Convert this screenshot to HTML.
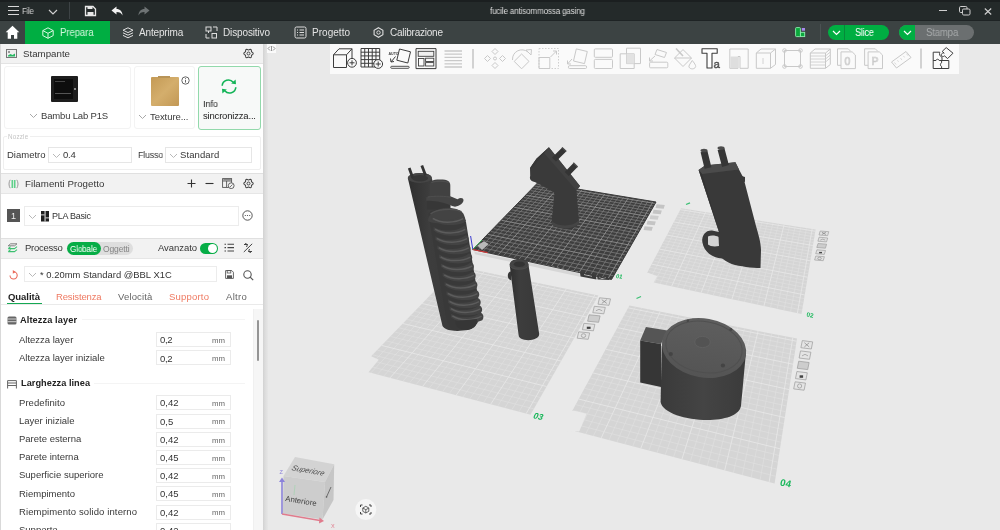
<!DOCTYPE html>
<html><head><meta charset="utf-8"><style>
*{box-sizing:border-box;margin:0;padding:0}
html,body{width:1000px;height:530px;overflow:hidden;background:#e9e9e9;font-family:"Liberation Sans",sans-serif;position:relative}
.a{position:absolute}
svg.a{will-change:transform}
.t{position:absolute;white-space:nowrap;line-height:1;font-family:"Liberation Sans",sans-serif;will-change:transform}
</style></head><body>
<div class="a" style="left:0px;top:0px;width:1000px;height:21px;background:#242a2a;"></div>
<div class="a" style="left:0px;top:0px;width:1000px;height:1.5px;background:#1b1f20;"></div>
<div class="a" style="left:0px;top:20px;width:1000px;height:1.3px;background:#1e2324;"></div>
<div class="a" style="left:8px;top:6px;width:11px;height:1.4px;background:#d8d8d8;"></div>
<div class="a" style="left:8px;top:10px;width:11px;height:1.4px;background:#d8d8d8;"></div>
<div class="a" style="left:8px;top:14px;width:11px;height:1.4px;background:#d8d8d8;"></div>
<div class="t" style="left:22.00px;top:7.10px;font-size:8.8px;color:#d0d0d0;letter-spacing:-0.305px;font-weight:normal;font-style:normal;transform:scaleX(0.9049);transform-origin:0 0;">File</div>
<svg class="a" style="left:48px;top:8.5px" width="10" height="6" viewBox="0 0 10 6"><path d="M1 1 L5.0 5 L9 1" stroke="#d0d0d0" stroke-width="1.2" fill="none"/></svg>
<div class="a" style="left:69px;top:2px;width:1px;height:17px;background:#3d4345;"></div>
<svg class="a" style="left:84px;top:5px" width="13" height="12" viewBox="0 0 13 12"><path d="M1.5 1.5 H9 L11.5 4 V10.5 H1.5 Z" stroke="#e8e8e8" stroke-width="1.3" fill="none"/><rect x="3.5" y="1.5" width="5" height="2.5" fill="#e8e8e8"/><rect x="3.5" y="7" width="6" height="3.5" fill="#e8e8e8"/></svg>
<svg class="a" style="left:111px;top:6px" width="12" height="10" viewBox="0 0 12 10"><path d="M5.5 0.5 L0.5 4.5 L5.5 8.5 V6 C8.5 6 10.5 7 11.5 9.5 C11.5 5.5 9 3 5.5 3 Z" fill="#f2f2f2"/></svg>
<svg class="a" style="left:138px;top:6px" width="12" height="10" viewBox="0 0 12 10"><path d="M6.5 0.5 L11.5 4.5 L6.5 8.5 V6 C3.5 6 1.5 7 0.5 9.5 C0.5 5.5 3 3 6.5 3 Z" fill="#6e7374"/></svg>
<div class="t" style="left:490.20px;top:7.20px;font-size:8.7px;color:#dcdcdc;letter-spacing:-0.194px;font-weight:normal;font-style:normal;transform:scaleX(0.9326);transform-origin:0 0;">fucile antisommossa gasing</div>
<div class="a" style="left:938.5px;top:10px;width:8px;height:1px;background:#cfcfcf;"></div>
<svg class="a" style="left:959px;top:6px" width="13" height="10" viewBox="0 0 13 10"><rect x="0.5" y="0.5" width="7.5" height="6" rx="1.2" stroke="#cfcfcf" fill="none"/><rect x="3.5" y="3" width="7.5" height="6" rx="1.2" stroke="#cfcfcf" fill="#242a2b"/></svg>
<svg class="a" style="left:984px;top:8px" width="8" height="7" viewBox="0 0 8 7"><path d="M0.8 0.5 L7.2 6.5 M7.2 0.5 L0.8 6.5" stroke="#d0d0d0" stroke-width="1.1"/></svg>
<div class="a" style="left:0px;top:21px;width:1000px;height:23px;background:#3c4343;"></div>
<svg class="a" style="left:5px;top:25px" width="15" height="15" viewBox="0 0 15 15"><path d="M7.5 0.8 L14.3 7.2 H12.3 V13.8 H9 V10 H6 V13.8 H2.7 V7.2 H0.7 Z" fill="#ffffff"/></svg>
<div class="a" style="left:25px;top:21px;width:85px;height:23px;background:#00ae42;"></div>
<svg class="a" style="left:42px;top:27px" width="12" height="12" viewBox="0 0 12 12"><path d="M6 0.8 L11.2 3.6 V8.6 L6 11.3 L0.8 8.6 V3.6 Z M0.8 3.6 L6 6.3 L11.2 3.6 M6 6.3 V11.3" stroke="#d7f7e0" stroke-width="1" fill="none" stroke-linejoin="round"/></svg>
<div class="t" style="left:59.80px;top:28.00px;font-size:10px;color:#d2f7dc;letter-spacing:-0.134px;font-weight:normal;font-style:normal;transform:scaleX(0.9663);transform-origin:0 0;">Prepara</div>
<svg class="a" style="left:122px;top:27px" width="12" height="12" viewBox="0 0 12 12"><path d="M6 0.8 L11 3.2 L6 5.6 L1 3.2 Z M1 5.8 L6 8.2 L11 5.8 M1 8.4 L6 10.8 L11 8.4" stroke="#dedede" stroke-width="1" fill="none" stroke-linejoin="round"/></svg>
<div class="t" style="left:139.30px;top:28.00px;font-size:10px;color:#e4e4e4;letter-spacing:-0.172px;font-weight:normal;font-style:normal;">Anteprima</div>
<svg class="a" style="left:205px;top:26px" width="13" height="13" viewBox="0 0 13 13"><rect x="1" y="1" width="5" height="4" stroke="#dedede" fill="none"/><path d="M3.5 5 V7" stroke="#dedede"/><rect x="7" y="7.5" width="4.5" height="4.5" stroke="#dedede" fill="none"/><path d="M1 8 V12 H4.5 M8 1 H12 V5" stroke="#dedede" fill="none"/></svg>
<div class="t" style="left:223.00px;top:28.00px;font-size:10px;color:#e4e4e4;letter-spacing:-0.135px;font-weight:normal;font-style:normal;">Dispositivo</div>
<svg class="a" style="left:294px;top:26px" width="13" height="13" viewBox="0 0 13 13"><rect x="1" y="1" width="11" height="11" rx="1.5" stroke="#dedede" fill="none"/><path d="M3 4 H4 M3 6.5 H4 M3 9 H4 M5.5 4 H10 M5.5 6.5 H10 M5.5 9 H10" stroke="#dedede"/></svg>
<div class="t" style="left:312.00px;top:28.00px;font-size:10px;color:#e4e4e4;letter-spacing:0.028px;font-weight:normal;font-style:normal;">Progetto</div>
<svg class="a" style="left:373px;top:27px" width="11" height="11" viewBox="0 0 11 11"><path d="M5.5 0.7 L9.9 3.2 V7.8 L5.5 10.3 L1.1 7.8 V3.2 Z" stroke="#dedede" stroke-width="1.1" fill="none"/><circle cx="5.5" cy="5.5" r="1.7" stroke="#dedede" fill="none"/></svg>
<div class="t" style="left:390.00px;top:28.00px;font-size:10px;color:#e4e4e4;letter-spacing:-0.235px;font-weight:normal;font-style:normal;">Calibrazione</div>
<svg class="a" style="left:794px;top:26px" width="12" height="12" viewBox="0 0 12 12"><rect x="1.6" y="1.6" width="4.8" height="9" rx="0.8" fill="#0aa83c" stroke="#8ff0b0" stroke-width="0.9"/><rect x="6.5" y="6.3" width="4.2" height="4.3" fill="#0aa83c" stroke="#8ff0b0" stroke-width="0.9"/><rect x="7.8" y="2" width="3.2" height="2.7" fill="#a98af0"/></svg>
<div class="a" style="left:820px;top:24px;width:1px;height:16px;background:#4b5253;"></div>
<div class="a" style="left:828px;top:24.5px;width:61px;height:15.5px;background:#00ae42;border-radius:8px"></div>
<div class="a" style="left:843.5px;top:24.5px;width:1px;height:15.5px;background:#068a3a;"></div>
<svg class="a" style="left:832px;top:30px" width="9" height="5.5" viewBox="0 0 9 5.5"><path d="M1 1 L4.5 4.5 L8 1" stroke="#ffffff" stroke-width="1.2" fill="none"/></svg>
<div class="t" style="left:854.50px;top:27.50px;font-size:10px;color:#ffffff;letter-spacing:-0.305px;font-weight:normal;font-style:normal;transform:scaleX(0.9167);transform-origin:0 0;">Slice</div>
<div class="a" style="left:899px;top:24.5px;width:74.5px;height:15.5px;background:#6b6f70;border-radius:8px"></div>
<div class="a" style="left:899px;top:24.5px;width:15.5px;height:15.5px;background:#00ae42;border-radius:8px 0 0 8px"></div>
<svg class="a" style="left:903px;top:30px" width="9" height="5.5" viewBox="0 0 9 5.5"><path d="M1 1 L4.5 4.5 L8 1" stroke="#ffffff" stroke-width="1.2" fill="none"/></svg>
<div class="t" style="left:925.75px;top:27.50px;font-size:10px;color:#a7aaab;letter-spacing:-0.181px;font-weight:normal;font-style:normal;transform:scaleX(0.9610);transform-origin:0 0;">Stampa</div>
<div class="a" style="left:0px;top:44px;width:263px;height:486px;background:#ffffff;"></div>
<div class="a" style="left:0px;top:44px;width:1px;height:486px;background:#d9d9d9;"></div>
<div class="a" style="left:1px;top:44px;width:262px;height:20px;background:#f2f2f2;border-bottom:1px solid #e3e3e3"></div>
<svg class="a" style="left:6px;top:49px" width="11" height="9" viewBox="0 0 11 9"><rect x="0.5" y="0.5" width="10" height="8" stroke="#777" fill="#eee"/><path d="M2 7.5 H9 V4.5 L6.5 6 L4.5 5 L2 6.5 Z" fill="#27b862"/><rect x="2" y="2" width="2" height="2" fill="#999"/></svg>
<div class="t" style="left:23.40px;top:49.00px;font-size:9.7px;color:#363636;letter-spacing:0.018px;font-weight:normal;font-style:normal;">Stampante</div>
<svg class="a" style="left:243px;top:48.3px" width="11" height="11" viewBox="0 0 11 11"><path d="M10.15 5.50 L10.12 5.74 L10.02 5.98 L9.87 6.19 L9.68 6.39 L9.46 6.56 L9.24 6.71 L9.03 6.85 L8.84 6.99 L8.69 7.12 L8.57 7.27 L8.50 7.45 L8.46 7.65 L8.44 7.88 L8.42 8.13 L8.40 8.40 L8.36 8.67 L8.28 8.94 L8.17 9.18 L8.02 9.38 L7.83 9.53 L7.60 9.62 L7.35 9.65 L7.09 9.63 L6.82 9.56 L6.56 9.46 L6.32 9.34 L6.09 9.23 L5.88 9.14 L5.69 9.07 L5.50 9.05 L5.31 9.07 L5.12 9.14 L4.91 9.23 L4.68 9.34 L4.44 9.46 L4.18 9.56 L3.91 9.63 L3.65 9.65 L3.40 9.62 L3.18 9.53 L2.98 9.38 L2.83 9.18 L2.72 8.94 L2.64 8.67 L2.60 8.40 L2.58 8.13 L2.56 7.88 L2.54 7.65 L2.50 7.45 L2.43 7.27 L2.31 7.12 L2.16 6.99 L1.97 6.85 L1.76 6.71 L1.54 6.56 L1.32 6.39 L1.13 6.19 L0.98 5.98 L0.88 5.74 L0.85 5.50 L0.88 5.26 L0.98 5.02 L1.13 4.81 L1.32 4.61 L1.54 4.44 L1.76 4.29 L1.97 4.15 L2.16 4.01 L2.31 3.88 L2.43 3.72 L2.50 3.55 L2.54 3.35 L2.56 3.12 L2.58 2.87 L2.60 2.60 L2.64 2.33 L2.72 2.06 L2.83 1.82 L2.98 1.62 L3.17 1.47 L3.40 1.38 L3.65 1.35 L3.91 1.37 L4.18 1.44 L4.44 1.54 L4.68 1.66 L4.91 1.77 L5.12 1.86 L5.31 1.93 L5.50 1.95 L5.69 1.93 L5.88 1.86 L6.09 1.77 L6.32 1.66 L6.56 1.54 L6.82 1.44 L7.09 1.37 L7.35 1.35 L7.60 1.38 L7.83 1.47 L8.02 1.62 L8.17 1.82 L8.28 2.06 L8.36 2.33 L8.40 2.60 L8.42 2.87 L8.44 3.12 L8.46 3.35 L8.50 3.55 L8.57 3.72 L8.69 3.88 L8.84 4.01 L9.03 4.15 L9.24 4.29 L9.46 4.44 L9.68 4.61 L9.87 4.81 L10.02 5.02 L10.12 5.26 L10.15 5.50Z" stroke="#444" stroke-width="1.05" fill="none" stroke-linejoin="round"/><circle cx="5.5" cy="5.5" r="1.5" stroke="#444" stroke-width="1" fill="none"/></svg>
<div class="a" style="left:4px;top:66px;width:127px;height:63px;background:#ffffff;border:1px solid #f3f3f3;border-radius:3px"></div>
<div class="a" style="left:51px;top:76px;width:27px;height:26px;background:#1d1d1d;border-radius:1px"></div>
<div class="a" style="left:53.5px;top:78.5px;width:19px;height:20px;background:#0d0d0d;"></div>
<div class="a" style="left:55px;top:93px;width:16px;height:1px;background:#555;"></div>
<div class="a" style="left:55px;top:81px;width:10px;height:1px;background:#444;"></div>
<div class="a" style="left:74px;top:88px;width:2px;height:2px;background:#888;"></div>
<svg class="a" style="left:28.5px;top:112.5px" width="9" height="5.5" viewBox="0 0 9 5.5"><path d="M1 1 L4.5 4.5 L8 1" stroke="#a8a8a8" stroke-width="1" fill="none"/></svg>
<div class="t" style="left:41.00px;top:110.90px;font-size:9.5px;color:#3a3a3a;letter-spacing:-0.165px;font-weight:normal;font-style:normal;">Bambu Lab P1S</div>
<div class="a" style="left:134px;top:66px;width:61px;height:63px;background:#ffffff;border:1px solid #f3f3f3;border-radius:3px"></div>
<div class="a" style="left:150.5px;top:77.2px;width:28px;height:29px;background:linear-gradient(135deg,#c49a55,#d4ae6c 50%,#c29855);border-radius:1px"></div>
<div class="a" style="left:158px;top:76px;width:12px;height:2px;background:#b89458;"></div>
<svg class="a" style="left:180.5px;top:76px" width="9" height="9" viewBox="0 0 9 9"><circle cx="4.5" cy="4.5" r="3.7" stroke="#555" stroke-width="0.9" fill="none"/><path d="M4.5 3.8 V6.6" stroke="#555" stroke-width="0.9"/><circle cx="4.5" cy="2.5" r="0.5" fill="#555"/></svg>
<svg class="a" style="left:138px;top:113.5px" width="9" height="5.5" viewBox="0 0 9 5.5"><path d="M1 1 L4.5 4.5 L8 1" stroke="#a8a8a8" stroke-width="1" fill="none"/></svg>
<div class="t" style="left:150.20px;top:111.60px;font-size:9.5px;color:#3a3a3a;letter-spacing:-0.064px;font-weight:normal;font-style:normal;">Texture...</div>
<div class="a" style="left:198px;top:66px;width:63px;height:64px;background:#f7f9f8;border:1px solid #92d9ab;border-radius:3px"></div>
<svg class="a" style="left:219px;top:78px" width="20" height="17" viewBox="0 0 20 17"><path d="M3.2 7.8 A6.2 6.2 0 0 1 14.2 4.3" stroke="#13b457" stroke-width="1.6" fill="none"/><path d="M16.8 9.2 A6.2 6.2 0 0 1 5.8 12.7" stroke="#13b457" stroke-width="1.6" fill="none"/><path d="M12.2 5.4 L17 6.3 L16.6 1.5 Z" fill="#13b457"/><path d="M7.8 11.6 L3 10.7 L3.4 15.5 Z" fill="#13b457"/></svg>
<div class="t" style="left:202.60px;top:99.40px;font-size:9.7px;color:#222;letter-spacing:-0.158px;font-weight:normal;font-style:normal;transform:scaleX(0.9563);transform-origin:0 0;">Info</div>
<div class="t" style="left:202.60px;top:110.60px;font-size:9.5px;color:#222;letter-spacing:-0.187px;font-weight:normal;font-style:normal;">sincronizza...</div>
<div class="a" style="left:3px;top:136px;width:258px;height:34px;background:#ffffff;border:1px solid #efefef;border-radius:2px"></div>
<div class="a" style="left:7px;top:133px;width:23px;height:6px;background:#ffffff;"></div>
<div class="t" style="left:8.10px;top:133.80px;font-size:6.3px;color:#c4c4c4;letter-spacing:0.191px;font-weight:normal;font-style:normal;">Nozzle</div>
<div class="t" style="left:6.70px;top:149.70px;font-size:9.5px;color:#363636;letter-spacing:-0.005px;font-weight:normal;font-style:normal;">Diametro</div>
<div class="a" style="left:48px;top:147px;width:84px;height:16px;background:#ffffff;border:1px solid #e6e6e6"></div>
<svg class="a" style="left:51.5px;top:152.5px" width="9" height="5.5" viewBox="0 0 9 5.5"><path d="M1 1 L4.5 4.5 L8 1" stroke="#b8b8b8" stroke-width="1" fill="none"/></svg>
<div class="t" style="left:63.20px;top:149.70px;font-size:9.5px;color:#363636;letter-spacing:-0.164px;font-weight:normal;font-style:normal;transform:scaleX(0.9629);transform-origin:0 0;">0.4</div>
<div class="t" style="left:137.70px;top:149.70px;font-size:9.5px;color:#363636;letter-spacing:-0.221px;font-weight:normal;font-style:normal;transform:scaleX(0.9414);transform-origin:0 0;">Flusso</div>
<div class="a" style="left:165px;top:147px;width:87px;height:16px;background:#ffffff;border:1px solid #e6e6e6"></div>
<svg class="a" style="left:168.5px;top:152.5px" width="9" height="5.5" viewBox="0 0 9 5.5"><path d="M1 1 L4.5 4.5 L8 1" stroke="#b8b8b8" stroke-width="1" fill="none"/></svg>
<div class="t" style="left:180.30px;top:149.70px;font-size:9.5px;color:#363636;letter-spacing:0.092px;font-weight:normal;font-style:normal;">Standard</div>
<div class="a" style="left:1px;top:173px;width:262px;height:21px;background:#f2f2f2;border-top:1px solid #e0e0e0;border-bottom:1px solid #e6e6e6"></div>
<svg class="a" style="left:7.5px;top:178.5px" width="11" height="10" viewBox="0 0 11 10"><path d="M2.2 0.8 C0.6 3 0.6 7 2.2 9.2 M8.8 0.8 C10.4 3 10.4 7 8.8 9.2" stroke="#9a9a9a" stroke-width="1" fill="none"/><rect x="3.5" y="1" width="1.6" height="8" fill="#5fd08a"/><rect x="5.9" y="1" width="1.6" height="8" fill="#5fd08a"/></svg>
<div class="t" style="left:24.60px;top:179.10px;font-size:9.7px;color:#363636;letter-spacing:0.040px;font-weight:normal;font-style:normal;">Filamenti Progetto</div>
<svg class="a" style="left:187px;top:179px" width="9" height="9" viewBox="0 0 9 9"><path d="M4.5 0.5 V8.5 M0.5 4.5 H8.5" stroke="#333" stroke-width="1.1"/></svg>
<svg class="a" style="left:205px;top:179px" width="9" height="9" viewBox="0 0 9 9"><path d="M0.5 4.5 H8.5" stroke="#333" stroke-width="1.1"/></svg>
<svg class="a" style="left:222px;top:178px" width="13" height="11" viewBox="0 0 13 11"><rect x="0.6" y="0.6" width="9" height="8.8" stroke="#555" stroke-width="0.9" fill="none"/><path d="M0.6 3 H9.6 M4.6 3 V9.4" stroke="#555" stroke-width="0.9"/><rect x="1.3" y="1" width="7.6" height="1.6" fill="#888"/><circle cx="9.2" cy="7.7" r="2.9" stroke="#555" stroke-width="0.9" fill="#f2f2f2"/><path d="M8 9 L10.5 6.5" stroke="#555" stroke-width="0.8"/></svg>
<svg class="a" style="left:242.8px;top:178.2px" width="11" height="11" viewBox="0 0 11 11"><path d="M10.15 5.50 L10.12 5.74 L10.02 5.98 L9.87 6.19 L9.68 6.39 L9.46 6.56 L9.24 6.71 L9.03 6.85 L8.84 6.99 L8.69 7.12 L8.57 7.27 L8.50 7.45 L8.46 7.65 L8.44 7.88 L8.42 8.13 L8.40 8.40 L8.36 8.67 L8.28 8.94 L8.17 9.18 L8.02 9.38 L7.83 9.53 L7.60 9.62 L7.35 9.65 L7.09 9.63 L6.82 9.56 L6.56 9.46 L6.32 9.34 L6.09 9.23 L5.88 9.14 L5.69 9.07 L5.50 9.05 L5.31 9.07 L5.12 9.14 L4.91 9.23 L4.68 9.34 L4.44 9.46 L4.18 9.56 L3.91 9.63 L3.65 9.65 L3.40 9.62 L3.18 9.53 L2.98 9.38 L2.83 9.18 L2.72 8.94 L2.64 8.67 L2.60 8.40 L2.58 8.13 L2.56 7.88 L2.54 7.65 L2.50 7.45 L2.43 7.27 L2.31 7.12 L2.16 6.99 L1.97 6.85 L1.76 6.71 L1.54 6.56 L1.32 6.39 L1.13 6.19 L0.98 5.98 L0.88 5.74 L0.85 5.50 L0.88 5.26 L0.98 5.02 L1.13 4.81 L1.32 4.61 L1.54 4.44 L1.76 4.29 L1.97 4.15 L2.16 4.01 L2.31 3.88 L2.43 3.72 L2.50 3.55 L2.54 3.35 L2.56 3.12 L2.58 2.87 L2.60 2.60 L2.64 2.33 L2.72 2.06 L2.83 1.82 L2.98 1.62 L3.17 1.47 L3.40 1.38 L3.65 1.35 L3.91 1.37 L4.18 1.44 L4.44 1.54 L4.68 1.66 L4.91 1.77 L5.12 1.86 L5.31 1.93 L5.50 1.95 L5.69 1.93 L5.88 1.86 L6.09 1.77 L6.32 1.66 L6.56 1.54 L6.82 1.44 L7.09 1.37 L7.35 1.35 L7.60 1.38 L7.83 1.47 L8.02 1.62 L8.17 1.82 L8.28 2.06 L8.36 2.33 L8.40 2.60 L8.42 2.87 L8.44 3.12 L8.46 3.35 L8.50 3.55 L8.57 3.72 L8.69 3.88 L8.84 4.01 L9.03 4.15 L9.24 4.29 L9.46 4.44 L9.68 4.61 L9.87 4.81 L10.02 5.02 L10.12 5.26 L10.15 5.50Z" stroke="#444" stroke-width="1.05" fill="none" stroke-linejoin="round"/><circle cx="5.5" cy="5.5" r="1.5" stroke="#444" stroke-width="1" fill="none"/></svg>
<div class="a" style="left:7px;top:209px;width:13px;height:13px;background:#555555;"></div>
<div class="t" style="left:11.00px;top:212.30px;font-size:9px;color:#f0f0f0;letter-spacing:-0.209px;font-weight:normal;font-style:normal;transform:scaleX(0.9381);transform-origin:0 0;">1</div>
<div class="a" style="left:24px;top:206px;width:215px;height:20px;background:#ffffff;border:1px solid #ececec"></div>
<svg class="a" style="left:28px;top:213.5px" width="9" height="5.5" viewBox="0 0 9 5.5"><path d="M1 1 L4.5 4.5 L8 1" stroke="#b8b8b8" stroke-width="1" fill="none"/></svg>
<svg class="a" style="left:41px;top:211px" width="8" height="11" viewBox="0 0 8 11"><rect x="0" y="0" width="8" height="10.5" fill="#1d1d1d"/><rect x="3.6" y="0" width="0.9" height="10.5" fill="#fff"/><rect x="0" y="3.5" width="3.6" height="0.8" fill="#fff"/><rect x="4.5" y="6.5" width="3.5" height="0.8" fill="#fff"/></svg>
<div class="t" style="left:52.00px;top:212.20px;font-size:9px;color:#333;letter-spacing:-0.252px;font-weight:normal;font-style:normal;">PLA Basic</div>
<svg class="a" style="left:242px;top:210px" width="11" height="11" viewBox="0 0 11 11"><circle cx="5.5" cy="5.5" r="4.7" stroke="#444" stroke-width="0.9" fill="none"/><circle cx="3.3" cy="5.5" r="0.6" fill="#444"/><circle cx="5.5" cy="5.5" r="0.6" fill="#444"/><circle cx="7.7" cy="5.5" r="0.6" fill="#444"/></svg>
<div class="a" style="left:1px;top:238px;width:262px;height:21px;background:#f2f2f2;border-top:1px solid #e0e0e0;border-bottom:1px solid #e6e6e6"></div>
<svg class="a" style="left:7px;top:243px" width="11" height="10" viewBox="0 0 11 10"><path d="M1.2 2.8 L3.6 0.8 H10 L7.6 2.8 Z" stroke="#777" stroke-width="0.9" fill="#eee" stroke-linejoin="round"/><path d="M1.2 5.6 L3.6 3.6 M1.2 5.6 H7.6 L10 3.6 M1.2 8.6 L3.6 6.6 M1.2 8.6 H7.6 L10 6.6" stroke="#3cc070" stroke-width="1.1" fill="none" stroke-linejoin="round"/></svg>
<div class="t" style="left:24.60px;top:243.20px;font-size:9.5px;color:#363636;letter-spacing:-0.271px;font-weight:normal;font-style:normal;">Processo</div>
<div class="a" style="left:66.8px;top:242px;width:66.5px;height:13px;background:#dedede;border-radius:6.5px"></div>
<div class="a" style="left:66.8px;top:242px;width:34.5px;height:13px;background:#06ad46;border-radius:6.5px"></div>
<div class="t" style="left:70.40px;top:244.60px;font-size:8.5px;color:#ffffff;letter-spacing:-0.157px;font-weight:normal;font-style:normal;transform:scaleX(0.9522);transform-origin:0 0;">Globale</div>
<div class="t" style="left:102.60px;top:244.60px;font-size:8.5px;color:#858585;letter-spacing:-0.118px;font-weight:normal;font-style:normal;">Oggetti</div>
<div class="t" style="left:157.70px;top:243.20px;font-size:9.5px;color:#363636;letter-spacing:-0.063px;font-weight:normal;font-style:normal;">Avanzato</div>
<div class="a" style="left:199.5px;top:243px;width:18.5px;height:10.5px;background:#06ad46;border-radius:5.5px"></div>
<div class="a" style="left:208px;top:243.8px;width:9px;height:9px;background:#ffffff;border-radius:4.5px"></div>
<svg class="a" style="left:224px;top:243px" width="11" height="10" viewBox="0 0 11 10"><path d="M0.5 1.2 H2 M0.5 4.6 H2 M0.5 8 H2 M3.5 1.2 H10 M3.5 4.6 H10 M3.5 8 H10" stroke="#444" stroke-width="1.1"/></svg>
<svg class="a" style="left:242.5px;top:243px" width="10" height="10" viewBox="0 0 10 10"><path d="M0.8 9 L9.2 0.8 M1 1.5 H4.5 L4.5 1.5 M2 0.5 L4.5 1.5 L3.5 4 M9 8.5 H5.5 M8 9.5 L5.5 8.5 L6.5 6" stroke="#444" stroke-width="1" fill="none"/></svg>
<svg class="a" style="left:7.5px;top:269.5px" width="10" height="10" viewBox="0 0 10 10"><path d="M2 5.5 A3.6 3.6 0 1 0 5.5 1.8" stroke="#ea6a5a" stroke-width="1.1" fill="none"/><path d="M4.8 0 L7.6 1.9 L4.8 3.8 Z" fill="#ea6a5a"/></svg>
<div class="a" style="left:24px;top:266px;width:193px;height:16px;background:#ffffff;border:1px solid #ececec"></div>
<svg class="a" style="left:28px;top:272px" width="9" height="5.5" viewBox="0 0 9 5.5"><path d="M1 1 L4.5 4.5 L8 1" stroke="#b8b8b8" stroke-width="1" fill="none"/></svg>
<div class="t" style="left:40.20px;top:269.50px;font-size:9.4px;color:#333;letter-spacing:0.022px;font-weight:normal;font-style:normal;">* 0.20mm Standard @BBL X1C</div>
<svg class="a" style="left:225px;top:270px" width="9" height="9" viewBox="0 0 9 9"><path d="M0.6 0.6 H6.8 L8.4 2.2 V8.4 H0.6 Z" stroke="#555" stroke-width="0.9" fill="none"/><rect x="2.2" y="0.6" width="3.6" height="2.4" stroke="#555" stroke-width="0.8" fill="none"/><rect x="2" y="5.3" width="5" height="3" fill="#555"/></svg>
<svg class="a" style="left:242.5px;top:269.5px" width="11" height="11" viewBox="0 0 11 11"><circle cx="4.5" cy="4.5" r="3.7" stroke="#555" stroke-width="1.1" fill="none"/><path d="M7.2 7.2 L10.2 10.2" stroke="#555" stroke-width="1.2"/></svg>
<div class="t" style="left:8.10px;top:291.80px;font-size:9.5px;color:#1e1e1e;letter-spacing:-0.034px;font-weight:bold;font-style:normal;">Qualità</div>
<div class="a" style="left:6.5px;top:303px;width:35.5px;height:1.6px;background:#15a853;"></div>
<div class="t" style="left:56.40px;top:291.80px;font-size:9.5px;color:#ef7a62;letter-spacing:-0.166px;font-weight:normal;font-style:normal;">Resistenza</div>
<div class="t" style="left:117.80px;top:291.80px;font-size:9.5px;color:#666;letter-spacing:0.147px;font-weight:normal;font-style:normal;">Velocità</div>
<div class="t" style="left:168.90px;top:291.80px;font-size:9.5px;color:#ef7a62;letter-spacing:0.206px;font-weight:normal;font-style:normal;">Supporto</div>
<div class="t" style="left:226.00px;top:291.80px;font-size:9.5px;color:#666;letter-spacing:0.292px;font-weight:normal;font-style:normal;">Altro</div>
<div class="a" style="left:1px;top:304.2px;width:262px;height:1px;background:#eaeaea;"></div>
<div class="a" style="left:253px;top:309px;width:10px;height:221px;background:#f6f6f6;border-left:1px solid #f0f0f0"></div>
<div class="a" style="left:257px;top:319.5px;width:2px;height:41px;background:#959595;border-radius:1px"></div>
<svg class="a" style="left:6.5px;top:315.5px" width="10" height="9" viewBox="0 0 10 9"><rect x="0.5" y="0.5" width="9" height="8" rx="1.5" fill="#666"/><path d="M0.5 3 H9.5 M0.5 5.7 H9.5" stroke="#eee" stroke-width="0.8"/></svg>
<div class="t" style="left:20.00px;top:316.40px;font-size:9.2px;color:#222;letter-spacing:0.111px;font-weight:bold;font-style:normal;">Altezza layer</div>
<div class="a" style="left:82px;top:318.5px;width:163px;height:1px;background:#f4f4f4;"></div>
<div class="t" style="left:18.70px;top:334.90px;font-size:9.5px;color:#383838;letter-spacing:-0.007px;font-weight:normal;font-style:normal;">Altezza layer</div>
<div class="a" style="left:156px;top:331.5px;width:75px;height:15px;background:#ffffff;border:1px solid #ebebeb"></div>
<div class="t" style="left:160.10px;top:335.30px;font-size:9.5px;color:#333;letter-spacing:-0.303px;font-weight:normal;font-style:normal;">0,2</div>
<div class="t" style="left:212.30px;top:337.00px;font-size:7.8px;color:#666;letter-spacing:0.010px;font-weight:normal;font-style:normal;">mm</div>
<div class="t" style="left:18.70px;top:353.30px;font-size:9.5px;color:#383838;letter-spacing:-0.017px;font-weight:normal;font-style:normal;">Altezza layer iniziale</div>
<div class="a" style="left:156px;top:350px;width:75px;height:15px;background:#ffffff;border:1px solid #ebebeb"></div>
<div class="t" style="left:160.10px;top:353.50px;font-size:9.5px;color:#333;letter-spacing:-0.303px;font-weight:normal;font-style:normal;">0,2</div>
<div class="t" style="left:212.30px;top:355.30px;font-size:7.8px;color:#666;letter-spacing:0.010px;font-weight:normal;font-style:normal;">mm</div>
<svg class="a" style="left:6.5px;top:379.5px" width="10" height="9" viewBox="0 0 10 9"><path d="M0.6 8.5 V0.6 H9.4 V8.5 M0.6 3 H9.4 M0.6 5.5 H9.4" stroke="#666" stroke-width="1" fill="none"/></svg>
<div class="t" style="left:20.70px;top:379.20px;font-size:9.2px;color:#222;letter-spacing:0.042px;font-weight:bold;font-style:normal;">Larghezza linea</div>
<div class="a" style="left:94px;top:383px;width:151px;height:1px;background:#f4f4f4;"></div>
<div class="t" style="left:18.50px;top:397.60px;font-size:9.5px;color:#383838;letter-spacing:0.058px;font-weight:normal;font-style:normal;">Predefinito</div>
<div class="a" style="left:156px;top:395.4px;width:75px;height:15px;background:#ffffff;border:1px solid #ebebeb"></div>
<div class="t" style="left:160.10px;top:398.40px;font-size:9.5px;color:#333;letter-spacing:0.000px;font-weight:normal;font-style:normal;">0,42</div>
<div class="t" style="left:212.30px;top:400.20px;font-size:7.8px;color:#666;letter-spacing:0.010px;font-weight:normal;font-style:normal;">mm</div>
<div class="t" style="left:18.50px;top:415.80px;font-size:9.5px;color:#383838;letter-spacing:0.000px;font-weight:normal;font-style:normal;">Layer iniziale</div>
<div class="a" style="left:156px;top:413.6px;width:75px;height:15px;background:#ffffff;border:1px solid #ebebeb"></div>
<div class="t" style="left:160.10px;top:416.60px;font-size:9.5px;color:#333;letter-spacing:0.000px;font-weight:normal;font-style:normal;">0,5</div>
<div class="t" style="left:212.30px;top:418.40px;font-size:7.8px;color:#666;letter-spacing:0.010px;font-weight:normal;font-style:normal;">mm</div>
<div class="t" style="left:18.50px;top:434.00px;font-size:9.5px;color:#383838;letter-spacing:0.000px;font-weight:normal;font-style:normal;">Parete esterna</div>
<div class="a" style="left:156px;top:431.8px;width:75px;height:15px;background:#ffffff;border:1px solid #ebebeb"></div>
<div class="t" style="left:160.10px;top:434.80px;font-size:9.5px;color:#333;letter-spacing:0.000px;font-weight:normal;font-style:normal;">0,42</div>
<div class="t" style="left:212.30px;top:436.60px;font-size:7.8px;color:#666;letter-spacing:0.010px;font-weight:normal;font-style:normal;">mm</div>
<div class="t" style="left:18.50px;top:452.20px;font-size:9.5px;color:#383838;letter-spacing:0.000px;font-weight:normal;font-style:normal;">Parete interna</div>
<div class="a" style="left:156px;top:450.0px;width:75px;height:15px;background:#ffffff;border:1px solid #ebebeb"></div>
<div class="t" style="left:160.10px;top:453.00px;font-size:9.5px;color:#333;letter-spacing:0.000px;font-weight:normal;font-style:normal;">0,45</div>
<div class="t" style="left:212.30px;top:454.80px;font-size:7.8px;color:#666;letter-spacing:0.010px;font-weight:normal;font-style:normal;">mm</div>
<div class="t" style="left:18.50px;top:470.40px;font-size:9.5px;color:#383838;letter-spacing:0.000px;font-weight:normal;font-style:normal;">Superficie superiore</div>
<div class="a" style="left:156px;top:468.2px;width:75px;height:15px;background:#ffffff;border:1px solid #ebebeb"></div>
<div class="t" style="left:160.10px;top:471.20px;font-size:9.5px;color:#333;letter-spacing:0.000px;font-weight:normal;font-style:normal;">0,42</div>
<div class="t" style="left:212.30px;top:473.00px;font-size:7.8px;color:#666;letter-spacing:0.010px;font-weight:normal;font-style:normal;">mm</div>
<div class="t" style="left:18.50px;top:488.60px;font-size:9.5px;color:#383838;letter-spacing:0.000px;font-weight:normal;font-style:normal;">Riempimento</div>
<div class="a" style="left:156px;top:486.4px;width:75px;height:15px;background:#ffffff;border:1px solid #ebebeb"></div>
<div class="t" style="left:160.10px;top:489.40px;font-size:9.5px;color:#333;letter-spacing:0.000px;font-weight:normal;font-style:normal;">0,45</div>
<div class="t" style="left:212.30px;top:491.20px;font-size:7.8px;color:#666;letter-spacing:0.010px;font-weight:normal;font-style:normal;">mm</div>
<div class="t" style="left:18.50px;top:506.80px;font-size:9.5px;color:#383838;letter-spacing:0.115px;font-weight:normal;font-style:normal;">Riempimento solido interno</div>
<div class="a" style="left:156px;top:504.6px;width:75px;height:15px;background:#ffffff;border:1px solid #ebebeb"></div>
<div class="t" style="left:160.10px;top:507.60px;font-size:9.5px;color:#333;letter-spacing:0.000px;font-weight:normal;font-style:normal;">0,42</div>
<div class="t" style="left:212.30px;top:509.40px;font-size:7.8px;color:#666;letter-spacing:0.010px;font-weight:normal;font-style:normal;">mm</div>
<div class="t" style="left:18.50px;top:525.00px;font-size:9.5px;color:#383838;letter-spacing:0.000px;font-weight:normal;font-style:normal;">Supporto</div>
<div class="a" style="left:156px;top:522.8px;width:75px;height:15px;background:#ffffff;border:1px solid #ebebeb"></div>
<div class="t" style="left:160.10px;top:525.80px;font-size:9.5px;color:#333;letter-spacing:0.000px;font-weight:normal;font-style:normal;">0,42</div>
<div class="t" style="left:212.30px;top:527.60px;font-size:7.8px;color:#666;letter-spacing:0.010px;font-weight:normal;font-style:normal;">mm</div>
<div class="a" style="left:263px;top:44px;width:5px;height:486px;background:linear-gradient(90deg,#d2d2d2,#dcdcdc 40%,#e6e6e6);"></div>
<svg class="a" style="left:267px;top:44px" width="733" height="486" viewBox="267 44 733 486"><polygon points="681.10,208.20 815.60,229.60 801.50,314.10 643.20,280.30" fill="#d5d5d5"/>
<path d="M685.93 208.97L648.79 281.49M644.95 276.98L802.16 310.14M690.79 209.74L654.43 282.70M646.66 273.71L802.81 306.25M695.69 210.52L660.11 283.91M648.36 270.48L803.45 302.42M700.61 211.30L665.83 285.13M650.03 267.30L804.08 298.65M710.56 212.89L677.41 287.61M653.30 261.08L805.31 291.29M715.59 213.69L683.28 288.86M654.91 258.03L805.91 287.69M720.65 214.49L689.18 290.12M656.48 255.03L806.50 284.15M725.74 215.30L695.14 291.39M658.04 252.06L807.08 280.66M736.03 216.94L707.20 293.96M661.10 246.26L808.22 273.84M741.23 217.77L713.30 295.27M662.59 243.41L808.77 270.50M746.46 218.60L719.45 296.58M664.07 240.60L809.32 267.22M751.73 219.44L725.65 297.90M665.52 237.83L809.86 263.98M762.38 221.13L738.21 300.59M668.38 232.40L810.92 257.64M767.76 221.99L744.57 301.94M669.78 229.74L811.44 254.54M773.18 222.85L750.98 303.31M671.16 227.11L811.95 251.49M778.63 223.72L757.44 304.69M672.52 224.52L812.45 248.47M789.65 225.47L770.53 307.49M675.20 219.43L813.44 242.57M795.22 226.36L777.16 308.90M676.51 216.93L813.92 239.68M800.83 227.25L783.85 310.33M677.81 214.47L814.39 236.83M806.48 228.15L790.59 311.77M679.09 212.03L814.86 234.02" stroke="#e0e0e0" stroke-width="0.6" fill="none"/>
<path d="M705.57 212.09L671.60 286.36M651.68 264.17L804.70 294.94M730.87 216.12L701.14 292.67M659.58 249.14L807.65 277.22M757.04 220.28L731.90 299.24M666.96 235.10L810.40 260.79M784.12 224.59L763.96 306.08M673.87 221.96L812.95 245.50M812.17 229.05L797.39 313.22M680.35 209.63L815.33 231.25" stroke="#e8e8e8" stroke-width="0.8" fill="none"/><polygon points="458.00,266.50 598.40,295.60 530.50,414.80 358.30,369.60" fill="#d5d5d5"/>
<path d="M463.19 267.57L364.56 371.24M363.16 364.57L533.86 408.90M468.39 268.65L370.86 372.90M367.93 359.65L537.15 403.13M473.63 269.74L377.20 374.56M372.60 354.82L540.37 397.48M478.88 270.83L383.57 376.23M377.17 350.08L543.52 391.94M489.46 273.02L396.42 379.61M386.07 340.89L549.63 381.22M494.79 274.12L402.90 381.31M390.39 336.42L552.59 376.03M500.14 275.23L409.41 383.02M394.63 332.04L555.49 370.93M505.51 276.35L415.97 384.74M398.78 327.74L558.33 365.94M516.33 278.59L429.19 388.21M406.87 319.37L563.85 356.26M521.78 279.72L435.85 389.96M410.81 315.30L566.53 351.55M527.25 280.85L442.56 391.72M414.67 311.31L569.15 346.94M532.75 281.99L449.30 393.49M418.47 307.38L571.73 342.42M543.82 284.29L462.91 397.06M425.86 299.74L576.74 333.62M549.39 285.44L469.77 398.86M429.45 296.02L579.18 329.35M554.99 286.60L476.68 400.67M432.99 292.36L581.57 325.15M560.62 287.77L483.62 402.50M436.47 288.77L583.92 321.03M571.94 290.12L497.63 406.17M443.24 281.76L588.49 313.01M577.65 291.30L504.70 408.03M446.55 278.34L590.71 309.10M583.38 292.49L511.81 409.89M449.80 274.98L592.89 305.27M589.13 293.68L518.97 411.77M452.99 271.68L595.04 301.50" stroke="#e0e0e0" stroke-width="0.6" fill="none"/>
<path d="M484.16 271.92L389.97 377.91M381.66 345.44L546.60 386.53M510.91 277.47L422.56 386.47M402.87 323.51L561.12 361.05M538.27 283.14L456.09 395.27M422.19 303.53L574.26 337.98M566.27 288.94L490.61 404.33M439.88 285.23L586.22 316.98M594.92 294.88L526.16 413.66M456.14 268.43L597.15 297.79" stroke="#e8e8e8" stroke-width="0.8" fill="none"/><polygon points="629.40,305.60 797.00,338.60 774.60,483.60 563.00,428.00" fill="#d5d5d5"/>
<path d="M635.49 306.80L570.52 429.98M566.27 421.97L775.73 476.30M641.61 308.00L578.10 431.97M569.47 416.06L776.83 469.18M647.76 309.22L585.73 433.97M572.61 410.28L777.90 462.21M653.95 310.43L593.42 435.99M575.68 404.62L778.96 455.41M666.44 312.89L608.97 440.08M581.64 393.64L780.99 442.25M672.74 314.13L616.84 442.15M584.53 388.31L781.97 435.88M679.08 315.38L624.76 444.23M587.36 383.09L782.93 429.66M685.45 316.64L632.74 446.32M590.14 377.97L783.87 423.56M698.31 319.17L648.88 450.57M595.53 368.03L785.70 411.76M704.80 320.45L657.05 452.71M598.15 363.20L786.58 406.04M711.33 321.73L665.27 454.87M600.72 358.46L787.45 400.44M717.89 323.02L673.56 457.05M603.25 353.81L788.29 394.96M731.14 325.63L690.34 461.46M608.15 344.77L789.94 384.31M737.82 326.95L698.82 463.69M610.54 340.37L790.74 379.15M744.55 328.27L707.37 465.94M612.88 336.05L791.52 374.08M751.31 329.60L715.99 468.20M615.18 331.81L792.29 369.11M764.96 332.29L733.43 472.78M619.66 323.55L793.78 359.46M771.85 333.65L742.25 475.10M621.85 319.52L794.50 354.77M778.78 335.01L751.14 477.44M623.99 315.57L795.21 350.17M785.75 336.39L760.11 479.79M626.10 311.68L795.91 345.66" stroke="#e0e0e0" stroke-width="0.6" fill="none"/>
<path d="M660.18 311.66L601.17 438.03M578.69 399.07L779.98 448.75M691.86 317.90L640.78 448.44M592.86 372.95L784.80 417.60M724.50 324.32L681.92 459.25M605.72 349.25L789.12 389.58M758.12 330.94L724.67 470.48M617.44 327.64L793.04 364.24M792.77 337.77L769.14 482.17M628.17 307.86L796.59 341.22" stroke="#e8e8e8" stroke-width="0.8" fill="none"/><polygon points="538.00,182.50 656.00,202.00 611.50,279.50 472.80,249.50" fill="#3e3e3e"/>
<path d="M542.30 183.21L477.78 250.58M475.85 246.37L613.61 275.82M546.63 183.93L482.80 251.66M478.85 243.28L615.69 272.21M550.98 184.64L487.84 252.75M481.80 240.25L617.73 268.65M555.35 185.37L492.93 253.85M484.71 237.26L619.73 265.16M564.17 186.82L503.19 256.07M490.39 231.42L623.64 258.35M568.61 187.56L508.37 257.19M493.16 228.57L625.55 255.04M573.08 188.30L513.59 258.32M495.90 225.77L627.42 251.77M577.58 189.04L518.84 259.46M498.59 223.00L629.27 248.56M586.64 190.54L529.46 261.75M503.85 217.59L632.86 242.29M591.21 191.29L534.82 262.91M506.42 214.95L634.62 239.23M595.81 192.05L540.21 264.08M508.96 212.34L636.35 236.22M600.43 192.82L545.65 265.26M511.46 209.77L638.05 233.26M609.75 194.36L556.63 267.63M516.35 204.75L641.38 227.47M614.45 195.13L562.17 268.83M518.74 202.29L643.00 224.64M619.18 195.92L567.76 270.04M521.10 199.86L644.60 221.86M623.93 196.70L573.38 271.26M523.43 197.47L646.17 219.11M633.52 198.29L584.75 273.71M527.98 192.79L649.25 213.75M638.36 199.08L590.49 274.96M530.22 190.50L650.76 211.13M643.22 199.89L596.27 276.21M532.42 188.24L652.24 208.54M648.11 200.70L602.10 277.47M534.59 186.01L653.70 206.00" stroke="#7a7a7a" stroke-width="0.8" fill="none"/>
<path d="M559.75 186.09L498.04 254.96M487.57 234.32L621.70 261.73M582.10 189.79L524.13 260.60M501.24 220.28L631.08 245.40M605.08 193.58L551.12 266.44M513.92 207.24L639.73 230.34M628.71 197.49L579.04 272.48M525.72 195.12L647.72 216.41M653.03 201.51L607.96 278.73M536.73 183.81L655.15 203.49" stroke="#8e8e8e" stroke-width="0.9" fill="none"/><polygon points="474,250.5 579,272 580,276.8 475,254.2" fill="#d6d6d6"/><polygon points="474,250.5 579,272 579.3,273.3 474.3,251.8" fill="#e6e6e6"/><polygon points="580,272.3 596,275.6 596.5,279.5 580.5,276.5" fill="#3a3a3a"/><polygon points="597,275.8 610,278.4 609,280 597.5,279.6" fill="#444"/><path d="M584 274.5 L592 276.2 M599 277 L602 278.5 L606 277.8" stroke="#cfcfcf" stroke-width="0.9" fill="none"/><polygon points="538.00,182.50 656.00,202.00 611.50,279.50 472.80,249.50" fill="none" stroke="#3a3a3a" stroke-width="1"/><polygon points="477.4,245.5 484,241.2 488.7,244 482,249.9" fill="#b9b9b9"/><path d="M472.8 249.5 L470.6 236" stroke="#3b3bd0" stroke-width="1"/><path d="M472.8 249.5 L482 240" stroke="#3caa55" stroke-width="1"/><path d="M472.8 249.5 L487.6 252.6" stroke="#d23c3c" stroke-width="1.2"/><polygon points="648.1,272.8 657.2,276.2 653.2,283.6 640,284 640,272.8" fill="#e9e9e9"/><polygon points="370.8,355.9 378.7,359.8 368.5,372.3 350,372 350,355.9" fill="#e9e9e9"/><polygon points="575.3,411 586.6,413.8 579.3,431.3 555,431 555,411" fill="#e9e9e9"/><path d="M656.6 204.3 L664.8 205.0 L663.7 208.7 L655.5 208.0 Z" fill="#c4c4c4" /><path d="M653.6 209.8 L661.8 210.5 L660.7 214.2 L652.5 213.5 Z" fill="#c4c4c4" /><path d="M650.6 215.3 L658.8 216.0 L657.7 219.7 L649.5 219.0 Z" fill="#cdcdcd" /><path d="M647.6 220.8 L655.8 221.5 L654.7 225.2 L646.5 224.5 Z" fill="#c4c4c4" /><path d="M644.6 226.3 L652.8 227.0 L651.7 230.7 L643.5 230.0 Z" fill="#c4c4c4" /><path d="M820.2 231.0 L828.8 231.7 L827.6 235.7 L819.0 235.0 Z" fill="#e0e0e0" stroke="#a0a0a0" stroke-width="0.7"/><path d="M821.9 232.2 L825.9 234.5 M825.9 232.2 L821.9 234.5" stroke="#777" stroke-width="0.6"/><path d="M819.1 237.2 L827.7 238.0 L826.5 241.9 L817.9 241.2 Z" fill="#e0e0e0" stroke="#a0a0a0" stroke-width="0.7"/><path d="M820.3 240.1 L822.8 239.1 L825.2 240.1" stroke="#888" stroke-width="0.6" fill="none"/><path d="M818.0 243.5 L826.6 244.2 L825.4 248.2 L816.8 247.5 Z" fill="#cdcdcd" stroke="#a0a0a0" stroke-width="0.7"/><path d="M816.9 249.8 L825.5 250.5 L824.3 254.4 L815.7 253.7 Z" fill="#e0e0e0" stroke="#a0a0a0" stroke-width="0.7"/><rect x="819.1" y="251.9" width="2.9" height="1.4" fill="#444"/><path d="M815.8 256.0 L824.4 256.7 L823.2 260.7 L814.6 260.0 Z" fill="#e0e0e0" stroke="#a0a0a0" stroke-width="0.7"/><ellipse cx="819.5" cy="258.4" rx="1.8" ry="1.2" fill="none" stroke="#888" stroke-width="0.6"/><path d="M599.5 297.8 L610.5 298.9 L609.0 305.3 L598.0 304.2 Z" fill="#e2e2e2" stroke="#999999" stroke-width="0.7"/><path d="M601.8 299.7 L606.8 303.4 M606.8 299.7 L601.8 303.4" stroke="#777" stroke-width="0.6"/><path d="M594.3 306.3 L605.3 307.4 L603.8 313.8 L592.8 312.7 Z" fill="#e2e2e2" stroke="#999999" stroke-width="0.7"/><path d="M595.9 310.8 L599.0 309.3 L602.2 310.8" stroke="#888" stroke-width="0.6" fill="none"/><path d="M589.1 314.8 L600.1 315.9 L598.6 322.3 L587.6 321.2 Z" fill="#cdcdcd" stroke="#999999" stroke-width="0.7"/><path d="M583.9 323.3 L594.9 324.4 L593.4 330.8 L582.4 329.7 Z" fill="#e2e2e2" stroke="#999999" stroke-width="0.7"/><rect x="586.8" y="326.7" width="3.8" height="2.2" fill="#444"/><path d="M578.7 331.8 L589.7 332.9 L588.2 339.3 L577.2 338.2 Z" fill="#e2e2e2" stroke="#999999" stroke-width="0.7"/><ellipse cx="583.5" cy="335.6" rx="2.2" ry="1.9" fill="none" stroke="#888" stroke-width="0.6"/><path d="M802.3 340.6 L812.7 341.9 L811.3 349.0 L800.9 347.7 Z" fill="#e4e4e4" stroke="#999999" stroke-width="0.7"/><path d="M804.4 342.7 L809.2 346.9 M809.2 342.7 L804.4 346.9" stroke="#777" stroke-width="0.6"/><path d="M800.5 350.9 L810.9 352.2 L809.5 359.3 L799.1 358.0 Z" fill="#e4e4e4" stroke="#999999" stroke-width="0.7"/><path d="M802.0 355.9 L805.0 354.3 L808.0 355.9" stroke="#888" stroke-width="0.6" fill="none"/><path d="M798.7 361.2 L809.1 362.5 L807.7 369.6 L797.3 368.3 Z" fill="#cdcdcd" stroke="#999999" stroke-width="0.7"/><path d="M796.9 371.5 L807.3 372.8 L805.9 379.9 L795.5 378.6 Z" fill="#e4e4e4" stroke="#999999" stroke-width="0.7"/><rect x="799.6" y="375.3" width="3.5" height="2.5" fill="#444"/><path d="M795.1 381.8 L805.5 383.1 L804.1 390.2 L793.7 388.9 Z" fill="#e4e4e4" stroke="#999999" stroke-width="0.7"/><ellipse cx="799.6" cy="386.0" rx="2.1" ry="2.1" fill="none" stroke="#888" stroke-width="0.6"/><defs><linearGradient id="gTube" x1="0" y1="0" x2="1" y2="0"><stop offset="0" stop-color="#2f2f2f"/><stop offset="0.35" stop-color="#3d3d3d"/><stop offset="1" stop-color="#383838"/></linearGradient><linearGradient id="gCyl" x1="0" y1="0" x2="1" y2="0"><stop offset="0" stop-color="#3a3a3a"/><stop offset="0.5" stop-color="#444444"/><stop offset="1" stop-color="#3b3b3b"/></linearGradient><linearGradient id="gTop" x1="0" y1="0" x2="0" y2="1"><stop offset="0" stop-color="#5e5e5e"/><stop offset="1" stop-color="#545454"/></linearGradient></defs><path d="M407.9 178.5 C407.9 172 431.7 171.5 431.7 177.8 L470 322 C470 331 447 334 442.5 326 Z" fill="url(#gTube)"/><ellipse cx="419.8" cy="178" rx="12" ry="5" fill="#454545"/><ellipse cx="420" cy="178.2" rx="8" ry="3.2" fill="#363636"/><path d="M409.2 168 L412.8 178 M421.8 165.5 L425.6 175.5" stroke="#333" stroke-width="2.8"/><path d="M429.6 197.5 L429.6 186 C429.6 181 432 179.5 440 179.5 C448 179.5 450.3 181 450.3 186 L450.3 197.5 Z" fill="#414141"/><path d="M431.5 183 C433 180.5 447 180.5 448.5 183" stroke="#4e4e4e" stroke-width="1.2" fill="none"/><path d="M426.8 199.3 H450.5 V209.5 H426.8 Z" fill="#373737"/><path d="M426.2 197.5 C427 195 449 195 451.5 196.8 L457.5 199.2 C460.5 197.3 463.5 197.8 463.5 200.3 C463.5 203 460 206.2 455 206.7 C450.5 206.2 444 200.8 426.2 200.8 Z" fill="#444444"/><path d="M428 197 C433 196 447 196 451 197.5" stroke="#4f4f4f" stroke-width="0.9" fill="none"/><path d="M428.4 214 C428.4 208 462 207 462 213 L466 222 L480 309 C481 320 477 327 468 330 L457 331 C450 330 447 322 446 316 Z" fill="#393939"/><path d="M428 221 C428 214 436 208 448 207.8 C456 208 463 211 464 215 L466 221 C460 224 434 225 428 221 Z" fill="#434343"/><path d="M430.5 214 C436 209.5 452 207.8 461.5 211.5" stroke="#525252" stroke-width="1.3" fill="none"/><path d="M431.4 216.2 C439.4 221.2 454.7 221.2 461.7 215.2 C465.2 215.7 465.9 220.2 463.7 222.7 C455.7 226.2 439.4 226.2 431.4 219.7 Z" fill="#434343"/><path d="M432.9 218.4 C440.4 223.4 454.7 223.4 463.2 218.7" stroke="#5c5c5c" stroke-width="1.5" fill="none"/><path d="M433.6 226.9 C441.6 231.9 456.8 231.9 463.8 225.9 C467.3 226.4 468.0 230.9 465.8 233.4 C457.8 236.9 441.6 236.9 433.6 230.4 Z" fill="#434343"/><path d="M435.1 229.1 C442.6 234.1 456.8 234.1 465.3 229.4" stroke="#5c5c5c" stroke-width="1.5" fill="none"/><path d="M435.4 236.2 C443.4 241.2 458.5 241.2 465.5 235.2 C469.0 235.7 469.7 240.2 467.5 242.7 C459.5 246.2 443.4 246.2 435.4 239.7 Z" fill="#434343"/><path d="M436.9 238.4 C444.4 243.4 458.5 243.4 467.0 238.7" stroke="#5c5c5c" stroke-width="1.5" fill="none"/><path d="M437.3 245.4 C445.3 250.4 460.3 250.4 467.3 244.4 C470.8 244.9 471.5 249.4 469.3 251.9 C461.3 255.4 445.3 255.4 437.3 248.9 Z" fill="#434343"/><path d="M438.8 247.6 C446.3 252.6 460.3 252.6 468.8 247.9" stroke="#5c5c5c" stroke-width="1.5" fill="none"/><path d="M439.1 254.6 C447.1 259.6 462.0 259.6 469.0 253.6 C472.5 254.1 473.2 258.6 471.0 261.1 C463.0 264.6 447.1 264.6 439.1 258.1 Z" fill="#434343"/><path d="M440.6 256.8 C448.1 261.8 462.0 261.8 470.5 257.1" stroke="#5c5c5c" stroke-width="1.5" fill="none"/><path d="M440.9 263.5 C448.9 268.5 463.7 268.5 470.7 262.5 C474.2 263.0 474.9 267.5 472.7 270.0 C464.7 273.5 448.9 273.5 440.9 267.0 Z" fill="#434343"/><path d="M442.4 265.7 C449.9 270.7 463.7 270.7 472.2 266.0" stroke="#5c5c5c" stroke-width="1.5" fill="none"/><path d="M442.7 272.7 C450.7 277.7 465.5 277.7 472.5 271.7 C476.0 272.2 476.7 276.7 474.5 279.2 C466.5 282.7 450.7 282.7 442.7 276.2 Z" fill="#434343"/><path d="M444.2 274.9 C451.7 279.9 465.5 279.9 474.0 275.2" stroke="#5c5c5c" stroke-width="1.5" fill="none"/><path d="M444.6 282.0 C452.6 287.0 467.2 287.0 474.2 281.0 C477.7 281.5 478.4 286.0 476.2 288.5 C468.2 292.0 452.6 292.0 444.6 285.5 Z" fill="#434343"/><path d="M446.1 284.2 C453.6 289.2 467.2 289.2 475.7 284.5" stroke="#5c5c5c" stroke-width="1.5" fill="none"/><path d="M446.4 291.2 C454.4 296.2 469.0 296.2 476.0 290.2 C479.5 290.7 480.2 295.2 478.0 297.7 C470.0 301.2 454.4 301.2 446.4 294.7 Z" fill="#434343"/><path d="M447.9 293.4 C455.4 298.4 469.0 298.4 477.5 293.7" stroke="#5c5c5c" stroke-width="1.5" fill="none"/><path d="M448.0 299.2 C456.0 304.2 470.5 304.2 477.5 298.2 C481.0 298.7 481.7 303.2 479.5 305.7 C471.5 309.2 456.0 309.2 448.0 302.7 Z" fill="#434343"/><path d="M449.5 301.4 C457.0 306.4 470.5 306.4 479.0 301.7" stroke="#5c5c5c" stroke-width="1.5" fill="none"/><path d="M449.5 306.4 C457.5 311.4 471.9 311.4 478.9 305.4 C482.4 305.9 483.1 310.4 480.9 312.9 C472.9 316.4 457.5 316.4 449.5 309.9 Z" fill="#434343"/><path d="M451.0 308.6 C458.5 313.6 471.9 313.6 480.4 308.9" stroke="#5c5c5c" stroke-width="1.5" fill="none"/><path d="M450.9 313.7 C458.9 318.7 473.2 318.7 480.2 312.7 C483.7 313.2 484.4 317.7 482.2 320.2 C474.2 323.7 458.9 323.7 450.9 317.2 Z" fill="#434343"/><path d="M452.4 315.9 C459.9 320.9 473.2 320.9 481.7 316.2" stroke="#5c5c5c" stroke-width="1.5" fill="none"/><path d="M455.5 321 C455 328 462 330 467 329.8 C473 329.5 477.5 326 477 319 Z" fill="#363636"/><path d="M548.9 147.3 L580 186 L576.5 190.5 L579 221 C578 228 570 230 564.7 229 C558 228 551.5 226 551.5 222 L554.5 193 C547 188 539 183.5 533 181.5 C530 180.5 529.5 178 530.2 176 L530 168 L536.4 158.7 Z" fill="#3a3a3a"/><path d="M548.9 147.3 L580 186 L576.5 190.5 L544 153 Z" fill="#414141"/><path d="M548.9 147.3 L536.4 158.7 L530 168 L533 167 L544 153 Z" fill="#363636"/><path d="M551.8 221 C556 226 572 228 579 220 L579 223 C574 230 558 230 551.8 224 Z" fill="#454545"/><path d="M554 159.5 L564.2 149.5 M566.8 174 L575.5 165" stroke="#343434" stroke-width="5.6"/><path d="M562 147.5 L566.3 151.6 M573.3 162.8 L577.6 167" stroke="#4a4a4a" stroke-width="1.4"/><path d="M509.7 265 C509.7 257 528.5 257 528.5 265 L539.2 334 C539.2 342 518.6 342 518.6 335 Z" fill="url(#gTube)"/><ellipse cx="519.1" cy="264.8" rx="9.4" ry="5.2" fill="#444444"/><path d="M510 266 C511 270 527 270 528.3 266" stroke="#4c4c4c" stroke-width="1" fill="none"/><ellipse cx="519.3" cy="264.2" rx="5.6" ry="2.8" fill="#333333"/><path d="M511 271.5 C507 271.5 506.3 279.5 511.5 280.5 Z" fill="#363636"/><path d="M698.6 170 L705 165.5 L735.4 162.2 L739 169.5 L743.5 178 L756 226 C759 236 761 244 761 250 L760.5 268 C752 268 740 266.5 731.7 264 C727 262 724 259.5 722 258.5 C712 257.5 704 252 702.3 242 C701.5 235 706 230 712 230.5 L719 232 Z" fill="#393939"/><path d="M698.6 170 L705 165.5 L735.4 162.2 L739 169.5 L702 174 Z" fill="#4b4b4b"/><path d="M698.6 170 L702 174 L720 234 L719.4 233.3 Z" fill="#333"/><path d="M708 236.5 C711 235 716 235.5 718.5 237 L719 246 C715 247 710 246.5 708 244.5 Z" fill="#d3d3d3"/><path d="M740 175.5 L745 177 L745 182 L741.5 181 Z" fill="#3a3a3a"/><path d="M704 151.5 L708 168 M721 149 L725.5 166" stroke="#363636" stroke-width="7"/><ellipse cx="704" cy="150.5" rx="3.5" ry="1.8" fill="#4c4c4c"/><ellipse cx="721" cy="148" rx="3.5" ry="1.8" fill="#4c4c4c"/><path d="M645.9 327 L667.4 330.4 L661 344 L640.2 340.6 Z" fill="#555555"/><path d="M640.2 340.6 L661 344 L661 387 L640.2 382.5 Z" fill="#363636"/><path d="M661.7 346 L660.6 402 C664 422 737 428 741 406 L746 352 Z" fill="url(#gCyl)"/><ellipse cx="704" cy="348" rx="42.5" ry="29.5" transform="rotate(10 704 348)" fill="url(#gTop)"/><ellipse cx="704" cy="347" rx="38.5" ry="25.5" transform="rotate(10 704 347)" fill="none" stroke="#505050" stroke-width="1"/><ellipse cx="702.5" cy="342" rx="7.8" ry="5.6" fill="#535353" stroke="#616161" stroke-width="0.9"/><circle cx="670.8" cy="354" r="2.1" fill="#444"/><circle cx="722.9" cy="365.5" r="2.1" fill="#444"/><circle cx="730.8" cy="329.5" r="1.5" fill="#474747"/><circle cx="687.8" cy="320.8" r="1.3" fill="#474747"/><text font-size="5.8" font-weight="bold" font-family="Liberation Sans" fill="#19b75a" transform="translate(615.6 277.9) rotate(8) skewX(-8)">01</text><text font-size="6.3" font-weight="bold" font-family="Liberation Sans" fill="#19b75a" transform="translate(806.3 316.6) rotate(9)">02</text><text font-size="8.6" font-weight="bold" font-family="Liberation Sans" fill="#19b75a" transform="translate(532.6 418.3) rotate(10) skewX(-14)">03</text><text font-size="9.8" font-weight="bold" font-family="Liberation Sans" fill="#19b75a" transform="translate(779.6 485.6) rotate(9) skewX(-4)">04</text><path d="M686 204.5 L690 202.8" stroke="#3bbf73" stroke-width="1.3"/><path d="M636.5 298.5 L641 296.5" stroke="#3bbf73" stroke-width="1.3"/></svg><svg class="a" style="left:275px;top:450px" width="110" height="80" viewBox="275 450 110 80"><path d="M295 457 L334.2 464.3 L325 482 L283.5 476 Z" fill="#d3d3d3"/><path d="M283.5 476 L325 482 L322.5 519.4 L282.8 513.4 Z" fill="#cdcdcd"/><path d="M334.2 464.3 L333.5 500 L322.5 519.4 L325 482 Z" fill="#c6c6c6"/><text font-size="7.6" font-style="italic" font-family="Liberation Sans" fill="#505050" transform="translate(291 470) rotate(10) skewX(-15)">Superiore</text><text font-size="7.8" font-family="Liberation Sans" fill="#404040" transform="translate(285 501) rotate(9)">Anteriore</text><path d="M331 487 L326.5 497" stroke="#555" stroke-width="0.8"/><circle cx="326.5" cy="497" r="0.8" fill="#555"/><path d="M282 514 V481.5" stroke="#8b82d9" stroke-width="1.6"/><path d="M279 482 L282 477.5 L285 482 Z" fill="#8b82d9"/><path d="M282 514 L320 520.5" stroke="#e07b8c" stroke-width="1.6"/><path d="M319.5 517.5 L324 521 L319 523.5 Z" fill="#e07b8c"/><text x="279.5" y="474" font-size="5.5" font-family="Liberation Sans" fill="#8b82d9">Z</text><text x="331" y="527.5" font-size="5.5" font-family="Liberation Sans" fill="#e07b8c">X</text><path d="M294 495 L295 485" stroke="#9cd5a9" stroke-width="0.6"/></svg><svg class="a" style="left:354px;top:498px" width="24" height="24" viewBox="354 498 24 24"><circle cx="365.8" cy="509.6" r="10.5" fill="#f6f6f6"/><path d="M360.5 507 V505 H362.5 M369 505 H371 V507 M371 512 V514 H369 M362.5 514 H360.5 V512" stroke="#444" stroke-width="1" fill="none"/><path d="M365.8 506.3 L368.8 508 V511.3 L365.8 513 L362.8 511.3 V508 Z M362.8 508 L365.8 509.7 L368.8 508 M365.8 509.7 V513" stroke="#444" stroke-width="0.8" fill="none" stroke-linejoin="round"/></svg>
<svg class="a" style="left:330px;top:44px" width="629" height="30" viewBox="330 44 629 30">
<rect x="330" y="44" width="629" height="30" fill="#fafafa"/>
<path d="M333.5 54.8 H346.5 V67.5 H333.5 Z M333.5 54.8 L339 48.8 H352 L346.5 54.8 M352 48.8 V58" fill="none" stroke="#3d3d3d" stroke-width="1" stroke-linejoin="round"/>
<circle cx="352" cy="62.8" r="4.4" fill="#fafafa" stroke="#3d3d3d" stroke-width="1"/><path d="M352 60.3 V65.3 M349.5 62.8 H354.5" stroke="#3d3d3d" stroke-width="1"/>
<path d="M361.00 48.5 V67 M364.74 48.5 V67 M368.48 48.5 V67 M372.22 48.5 V67 M375.96 48.5 V67 M379.70 48.5 V67 M361 48.50 H379.7 M361 52.20 H379.7 M361 55.90 H379.7 M361 59.60 H379.7 M361 63.30 H379.7 M361 67.00 H379.7 " fill="none" stroke="#3d3d3d" stroke-width="1" stroke-linejoin="round"/>
<circle cx="378.2" cy="64" r="4.4" fill="#fafafa" stroke="#3d3d3d" stroke-width="1"/><path d="M378.2 61.5 V66.5 M375.7 64 H380.7" stroke="#3d3d3d" stroke-width="1"/>
<path d="M399.5 49 L410.5 51.8 L407.8 63 L396.8 60.2 Z" fill="none" stroke="#3d3d3d" stroke-width="1" stroke-linejoin="round"/>
<path d="M395.5 56.5 L391 62 M391 62 L390.5 58.5 M391 62 L394 61.5" fill="none" stroke="#3d3d3d" stroke-width="1" stroke-linejoin="round"/>
<text x="388.5" y="54.6" font-size="3.6" font-family="Liberation Sans" font-weight="bold" fill="#3d3d3d">AUTO</text>
<rect x="390.7" y="66.3" width="18.5" height="2" rx="1" fill="none" stroke="#3d3d3d" stroke-width="0.9"/>
<rect x="416" y="48.6" width="20" height="20" fill="none" stroke="#3d3d3d" stroke-width="1" stroke-linejoin="round"/><rect x="418.2" y="51.3" width="15.6" height="5" fill="#f0f0f0" stroke="#3d3d3d" stroke-width="0.9"/><rect x="418.5" y="58.5" width="5.5" height="7.5" fill="none" stroke="#3d3d3d" stroke-width="0.9"/><rect x="425.6" y="58.2" width="8.2" height="3.3" fill="none" stroke="#3d3d3d" stroke-width="0.9"/><rect x="425.6" y="62.6" width="8.2" height="3.4" fill="none" stroke="#3d3d3d" stroke-width="0.9"/>
<path d="M444.5 51 H462 M444.5 54.2 H462 M444.5 57.4 H462 M444.5 60.6 H462 M444.5 63.8 H462 M444.5 67 H462" stroke="#c9c9c9" stroke-width="1.3"/>
<path d="M473 49 V68.5 M921 48.6 V68.4" stroke="#bdbdbd" stroke-width="1.3"/>
<path d="M495 48.5 L498 51.5 L495 54.5 L492 51.5 Z M495 62.5 L498 65.5 L495 68.5 L492 65.5 Z M484.5 58.5 L487.5 55.5 L490.5 58.5 L487.5 61.5 Z M499.5 58.5 L502.5 55.5 L505.5 58.5 L502.5 61.5 Z" fill="none" stroke="#c9c9c9" stroke-width="1" stroke-linejoin="round"/><circle cx="495" cy="58.5" r="1.5" fill="none" stroke="#c9c9c9" stroke-width="1" stroke-linejoin="round"/>
<path d="M521.6 54 L529 61.4 L521.6 68.8 L514.2 61.4 Z" fill="none" stroke="#c9c9c9" stroke-width="1" stroke-linejoin="round"/><path d="M512.5 60 C512 51 522 47 528 52" fill="none" stroke="#c9c9c9" stroke-width="1" stroke-linejoin="round"/><path d="M526 50 L531.5 49.5 L531 55 Z" fill="none" stroke="#c9c9c9" stroke-width="1" stroke-linejoin="round"/>
<rect x="539" y="57.5" width="10.8" height="11" fill="none" stroke="#c9c9c9" stroke-width="1" stroke-linejoin="round"/><rect x="539" y="48.5" width="19.5" height="20" fill="none" stroke="#c9c9c9" stroke-width="0.9" stroke-dasharray="1.5 1.5"/><path d="M550.5 57 L556.5 51 M553 51 H556.5 V54.5" fill="none" stroke="#c9c9c9" stroke-width="1" stroke-linejoin="round"/>
<path d="M576.3 48.9 L587.3 51.5 L584.5 63.6 L573.5 61 Z" fill="none" stroke="#c9c9c9" stroke-width="1" stroke-linejoin="round"/><path d="M572 59 L567.5 64 M567.5 64 L567.5 60.5 M567.5 64 L571 64" fill="none" stroke="#c9c9c9" stroke-width="1" stroke-linejoin="round"/><rect x="568.4" y="65.7" width="18.2" height="2.8" rx="1.2" fill="none" stroke="#c9c9c9" stroke-width="1" stroke-linejoin="round"/>
<rect x="594.3" y="48.9" width="18.2" height="8.4" rx="1" fill="none" stroke="#c9c9c9" stroke-width="1" stroke-linejoin="round"/><rect x="594.3" y="59.4" width="18.2" height="9.1" rx="1" fill="none" stroke="#c9c9c9" stroke-width="1" stroke-linejoin="round"/>
<rect x="626.5" y="48.2" width="14" height="15.4" fill="none" stroke="#c9c9c9" stroke-width="1" stroke-linejoin="round"/><rect x="620.2" y="53.8" width="14" height="14.7" fill="none" stroke="#c9c9c9" stroke-width="1" stroke-linejoin="round"/><rect x="626.5" y="53.8" width="7.7" height="9.8" fill="#e2e2e2"/>
<rect x="649.6" y="62.2" width="18.2" height="5.6" rx="1" fill="none" stroke="#c9c9c9" stroke-width="1" stroke-linejoin="round"/><path d="M657 49.5 L666.5 52.5 L664.5 57.5 L655 54.5 Z" fill="none" stroke="#c9c9c9" stroke-width="1" stroke-linejoin="round"/><path d="M655 56 L649.5 61 M649.5 61 V57.5 M649.5 61 H653" fill="none" stroke="#c9c9c9" stroke-width="1" stroke-linejoin="round"/>
<path d="M674.5 58 L683 49.6 L691.5 58 L683 66.5 Z M674.5 58 H691.5" fill="none" stroke="#c9c9c9" stroke-width="1" stroke-linejoin="round"/><path d="M692.3 60.5 C695.5 64.5 696 66 695.5 67 C694.5 69.5 690 69.5 689 67 C688.6 66 689.5 64.5 692.3 60.5 Z" fill="none" stroke="#c9c9c9" stroke-width="1" stroke-linejoin="round"/><path d="M676 48.5 L683 56" stroke="#c9c9c9" stroke-width="1.6"/>
<path d="M702 48.7 H717.2 V53.2 H712 V68 H707 V53.2 H702 Z" fill="#ffffff" stroke="#3d3d3d" stroke-width="1.1" stroke-linejoin="round"/>
<text x="713.4" y="68" font-size="11.5" font-family="Liberation Sans" fill="#6a6a6a" stroke="#444" stroke-width="0.4">a</text>
<path d="M729.8 49 H748.2 V68.3 H740 V56.5 H738 V68.3 H729.8 Z" fill="none" stroke="#c9c9c9" stroke-width="1" stroke-linejoin="round"/><rect x="730.5" y="56.5" width="7.3" height="11.5" fill="#dedede"/>
<path d="M756.3 53 H770.5 V68.3 H756.3 Z M756.3 53 L761 49 H775.5 L770.5 53 M775.5 49 V64.5 L770.5 68.3" fill="none" stroke="#c9c9c9" stroke-width="1" stroke-linejoin="round"/><path d="M763 58 V64" stroke="#c9c9c9" stroke-width="0.8"/>
<rect x="784.5" y="50.5" width="16" height="16" fill="none" stroke="#c9c9c9" stroke-width="1" stroke-linejoin="round"/><circle cx="784.5" cy="50.5" r="1.8" fill="none" stroke="#c9c9c9" stroke-width="1" stroke-linejoin="round"/><circle cx="800.5" cy="50.5" r="1.8" fill="none" stroke="#c9c9c9" stroke-width="1" stroke-linejoin="round"/><circle cx="784.5" cy="66.5" r="1.8" fill="none" stroke="#c9c9c9" stroke-width="1" stroke-linejoin="round"/><circle cx="800.5" cy="66.5" r="1.8" fill="none" stroke="#c9c9c9" stroke-width="1" stroke-linejoin="round"/>
<path d="M810.3 53 H825.5 V68.3 H810.3 Z M810.3 53 L815 49 H830.3 L825.5 53 M830.3 49 V64.5 L825.5 68.3" fill="none" stroke="#c9c9c9" stroke-width="1" stroke-linejoin="round"/><path d="M810.3 56 H825.5 M810.3 59 H825.5 M810.3 62 H825.5 M810.3 65 H825.5 M825.5 56 L830.3 52 M825.5 59 L830.3 55 M825.5 62 L830.3 58" stroke="#c9c9c9" stroke-width="0.8"/>
<path d="M837.5 48.8 H848.2 L850.7 51.3 M837.5 48.8 V65.3 H841.0" fill="none" stroke="#c9c9c9" stroke-width="1" stroke-linejoin="round"/>
<path d="M841.0 51.9 H852.2 L855.4000000000001 55 V68.6 H841.0 Z" fill="none" stroke="#c9c9c9" stroke-width="1" stroke-linejoin="round"/>
<text x="844.4000000000001" y="65" font-size="10.5" font-family="Liberation Sans" fill="none" stroke="#c9c9c9" stroke-width="0.7">0</text>
<path d="M864.5999999999999 48.8 H875.3 L877.8 51.3 M864.5999999999999 48.8 V65.3 H868.0999999999999" fill="none" stroke="#c9c9c9" stroke-width="1" stroke-linejoin="round"/>
<path d="M868.0999999999999 51.9 H879.3 L882.5 55 V68.6 H868.0999999999999 Z" fill="none" stroke="#c9c9c9" stroke-width="1" stroke-linejoin="round"/>
<text x="871.5" y="65" font-size="10.5" font-family="Liberation Sans" fill="none" stroke="#c9c9c9" stroke-width="0.7">P</text>
<path d="M891.5 62 L906 51.5 L911 57.5 L896.5 68 Z" fill="none" stroke="#c9c9c9" stroke-width="1" stroke-linejoin="round"/><path d="M894.5 62.5 L896 64.5 M897.5 60.3 L898.5 61.8 M900.5 58.1 L902 60.1 M903.5 55.9 L904.5 57.4 M906.5 53.7 L908 55.7" stroke="#c9c9c9" stroke-width="0.7"/>
<path d="M933.2 52.2 H939.8 C939 54 939.8 56.5 942 57.2 V60.5 H948.8 V68.5 H933.2 Z" fill="none" stroke="#3d3d3d" stroke-width="1" stroke-linejoin="round"/>
<path d="M933.2 60.5 H936 C936.3 58.8 938.8 58.8 939.2 60.5 H942 M941.6 60.5 V62.8 C940 63.2 940 66 941.6 66.5 V68.5" fill="none" stroke="#3d3d3d" stroke-width="1" stroke-linejoin="round"/>
<path d="M942.3 51.3 L946.2 47.6 L953 53.2 L947.6 58.6 L944.6 55.9 C943.2 57.2 940.8 56.2 941.4 54.4 C941.8 53 943.4 52.6 944.2 53.2 Z" fill="#fafafa" stroke="#3d3d3d" stroke-width="1" stroke-linejoin="round"/>
</svg>
<div class="a" style="left:267px;top:44px;width:9px;height:9px;background:#fafafa"></div>
<svg class="a" style="left:267px;top:44px" width="9" height="9"><path d="M3 2.5 L1 4.5 L3 6.5 M6 2.5 L8 4.5 L6 6.5 M4.5 2 V7" stroke="#777" stroke-width="0.8" fill="none"/></svg>
</body></html>
